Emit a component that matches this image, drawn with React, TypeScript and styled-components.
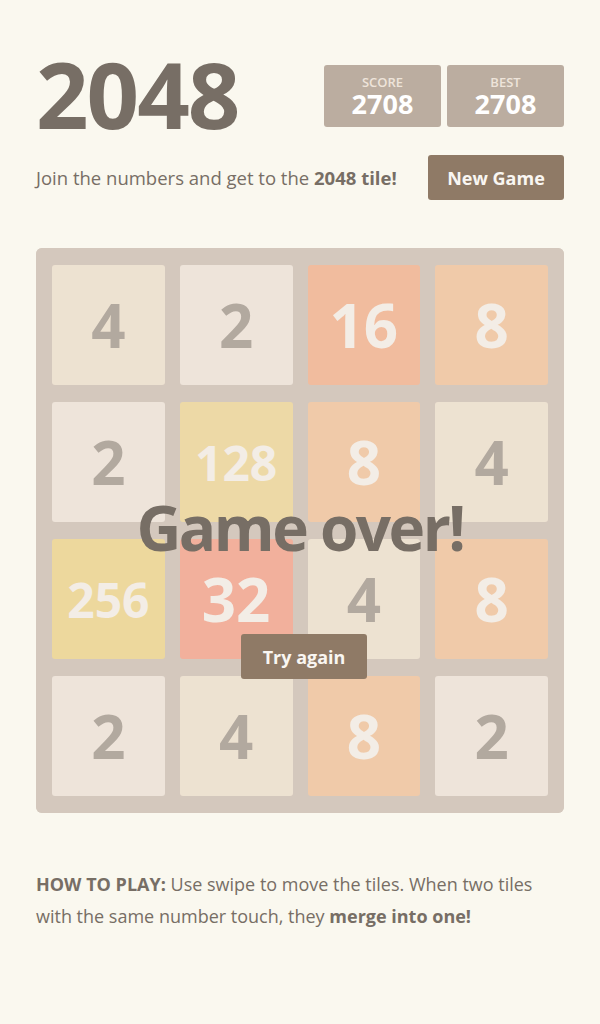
import React from 'react';
import styled, { createGlobalStyle } from 'styled-components';

const GlobalStyle = createGlobalStyle`
  html, body {
    margin: 0;
    padding: 0;
    background: #faf8ef;
  }
  body {
    font-family: 'Open Sans', 'Liberation Sans', sans-serif;
    color: #776e65;
  }
`;

const tileColors: Record<number, { bg: string; fg: string; size: number }> = {
  2: { bg: '#eee4da', fg: '#776e65', size: 60 },
  4: { bg: '#ede0c8', fg: '#776e65', size: 60 },
  8: { bg: '#f2b179', fg: '#f9f6f2', size: 60 },
  16: { bg: '#f59563', fg: '#f9f6f2', size: 60 },
  32: { bg: '#f67c5f', fg: '#f9f6f2', size: 60 },
  64: { bg: '#f65e3b', fg: '#f9f6f2', size: 60 },
  128: { bg: '#edcf72', fg: '#f9f6f2', size: 48 },
  256: { bg: '#edcc61', fg: '#f9f6f2', size: 48 },
};

const board = [
  [4, 2, 16, 8],
  [2, 128, 8, 4],
  [256, 32, 4, 8],
  [2, 4, 8, 2],
];

const Container = styled.div`
  padding: 52px 36px 0;
`;

const Heading = styled.div`
  display: flex;
  justify-content: space-between;
  align-items: center;
`;

const Title = styled.h1`
  margin: 0;
  font-size: 92px;
  line-height: 84px;
  font-weight: 700;
  letter-spacing: -2px;
  color: #776e65;
`;

const Scores = styled.div`
  display: flex;
  gap: 6px;
  margin-top: 4px;
`;

const ScoreBox = styled.div`
  width: 117px;
  height: 62px;
  background: #bbada0;
  border-radius: 3px;
  display: flex;
  flex-direction: column;
  align-items: center;
  justify-content: center;
  color: #fff;
`;

const ScoreLabel = styled.div`
  font-size: 13px;
  line-height: 16px;
  font-weight: 600;
  color: #eee4da;
  text-transform: uppercase;
`;

const ScoreValue = styled.div`
  font-size: 27px;
  line-height: 28px;
  font-weight: 700;
`;

const Intro = styled.div`
  display: flex;
  justify-content: space-between;
  align-items: center;
  margin-top: 19px;
`;

const IntroText = styled.p`
  margin: 0;
  font-size: 18.5px;
  color: #776e65;

  b {
    font-weight: 700;
  }
`;

const Button = styled.button`
  background: #8f7a66;
  color: #f9f6f2;
  border: none;
  border-radius: 3px;
  font-family: inherit;
  font-weight: 700;
  font-size: 18px;
  height: 45px;
  padding: 0;
  white-space: nowrap;
  cursor: pointer;
`;

const NewGameButton = styled(Button)`
  width: 136px;
`;

const GridWrap = styled.div`
  position: relative;
  margin-top: 48px;
  background: #bbada0;
  border-radius: 6px;
  padding: 17px 16px;
`;

const Grid = styled.div`
  display: grid;
  grid-template-columns: repeat(4, 1fr);
  grid-auto-rows: 120px;
  column-gap: 15px;
  row-gap: 17px;
`;

const Tile = styled.div<{ $bg: string; $fg: string; $size: number }>`
  background: ${(p) => p.$bg};
  color: ${(p) => p.$fg};
  font-size: ${(p) => p.$size}px;
  font-weight: 700;
  border-radius: 3px;
  display: flex;
  align-items: center;
  justify-content: center;
`;

// translucent veil shown over the board when no moves are left
const Overlay = styled.div`
  position: absolute;
  inset: 0;
  border-radius: 6px;
  background: rgba(238, 228, 218, 0.5);
  display: flex;
  flex-direction: column;
  align-items: center;
  padding-top: 247px;
`;

const OverlayTitle = styled.p`
  margin: 0;
  font-size: 62px;
  line-height: 64px;
  font-weight: 700;
  letter-spacing: -2.5px;
  color: #776e65;
`;

const TryAgain = styled(Button)`
  margin-top: 75px;
  width: 126px;
  margin-left: 8px;
`;

const HowTo = styled.p`
  margin: 55px 0 0;
  font-size: 18px;
  line-height: 32px;
  color: #776e65;

  b {
    font-weight: 700;
  }
`;

export default function App() {
  return (
    <>
      <GlobalStyle />
      <Container>
        <Heading>
          <Title>2048</Title>
          <Scores>
            <ScoreBox>
              <ScoreLabel>Score</ScoreLabel>
              <ScoreValue>2708</ScoreValue>
            </ScoreBox>
            <ScoreBox>
              <ScoreLabel>Best</ScoreLabel>
              <ScoreValue>2708</ScoreValue>
            </ScoreBox>
          </Scores>
        </Heading>
        <Intro>
          <IntroText>
            Join the numbers and get to the <b>2048 tile!</b>
          </IntroText>
          <NewGameButton>New Game</NewGameButton>
        </Intro>
        <GridWrap>
          <Grid>
            {board.flat().map((v, i) => {
              const c = tileColors[v];
              return (
                <Tile key={i} $bg={c.bg} $fg={c.fg} $size={c.size}>
                  {v}
                </Tile>
              );
            })}
          </Grid>
          <Overlay>
            <OverlayTitle>Game over!</OverlayTitle>
            <TryAgain>Try again</TryAgain>
          </Overlay>
        </GridWrap>
        <HowTo>
          <b>HOW TO PLAY:</b> Use swipe to move the tiles. When two tiles with the same
          number touch, they <b>merge into one!</b>
        </HowTo>
      </Container>
    </>
  );
}
